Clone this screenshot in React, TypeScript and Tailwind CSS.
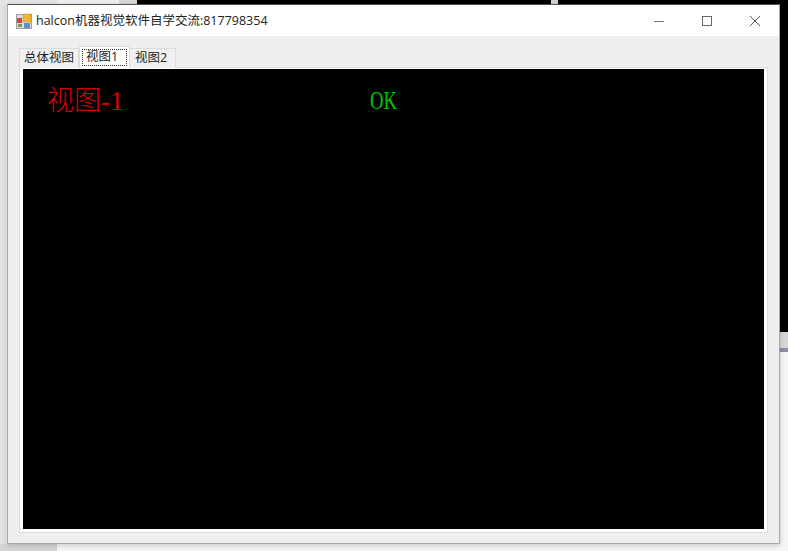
const uiFont = { fontFamily: '"Open Sans", "Noto Sans CJK SC", sans-serif' };

function AppIcon() {
  return (
    <svg width="16" height="16" viewBox="0 0 16 16" className="shrink-0">
      <rect x="0.5" y="1.5" width="15" height="14" fill="#dcdcdc" stroke="#a0a0a0" />
      <rect x="7" y="1" width="8" height="8" fill="#f2b632" stroke="#c98f18" strokeWidth="0.5" />
      <rect x="1" y="5" width="5" height="5" fill="#d8453a" />
      <rect x="8" y="10" width="6" height="5" fill="#5b8fd0" />
      <rect x="2" y="11" width="4" height="3" fill="#7a9a5a" />
    </svg>
  );
}

function WindowButtons() {
  return (
    <div className="flex h-full items-center">
      <div className="flex w-[48px] justify-center">
        <svg width="12" height="12" viewBox="0 0 12 12">
          <path d="M1 6.5H11" stroke="#777" strokeWidth="1" />
        </svg>
      </div>
      <div className="flex w-[48px] justify-center">
        <svg width="12" height="12" viewBox="0 0 12 12">
          <rect x="1.5" y="1.5" width="9" height="9" fill="none" stroke="#666" strokeWidth="1" />
        </svg>
      </div>
      <div className="flex w-[48px] justify-center">
        <svg width="12" height="12" viewBox="0 0 12 12">
          <path d="M1 1L11 11M11 1L1 11" stroke="#555" strokeWidth="1" />
        </svg>
      </div>
    </div>
  );
}

export default function App() {
  return (
    <div className="relative h-[551px] w-[788px] overflow-hidden bg-[#f4f4f4]" style={uiFont}>
      {/* windows behind */}
      <div className="absolute left-0 top-0 h-[4px] w-[57px] bg-[#e4e4e4]" />
      <div className="absolute left-[57px] top-0 h-[4px] w-[62px] bg-[#f0f0f0]" />
      <div className="absolute left-[119px] top-0 h-[4px] w-[18px] bg-[#d8d8d8]" />
      <div className="absolute left-[137px] top-0 h-[4px] w-[414px] bg-black" />
      <div className="absolute left-[551px] top-0 h-[4px] w-[7px] bg-[#d0d0d0]" />
      <div className="absolute left-[558px] top-0 h-[4px] w-[230px] bg-black" />
      <div className="absolute left-[780px] top-[4px] h-[328px] w-[8px] bg-black" />
      <div className="absolute left-[780px] top-[332px] h-[16px] w-[8px] bg-[#d6d6d6]" />
      <div className="absolute left-[780px] top-[348px] h-[4px] w-[8px] bg-[#8a90a8]" />
      <div className="absolute left-0 top-[4px] h-[540px] w-[6px] bg-[#e2e2e2]" />
      <div className="absolute left-0 top-[544px] h-[7px] w-[57px] bg-[#d4d4d4]" />

      {/* main window */}
      <div className="absolute left-[7px] top-[4px] flex h-[540px] w-[773px] flex-col border border-[#a8a8a8] border-t-[#555] bg-[#efefef] shadow-[0_1px_5px_rgba(0,0,0,0.2)]">
        <div className="flex h-[31px] shrink-0 items-center justify-between bg-white">
          <div className="flex items-center gap-[4px] pl-[8px] pt-[1px] text-[12.5px] text-[#222]">
            <AppIcon />
            <span>halcon机器视觉软件自学交流:817798354</span>
          </div>
          <WindowButtons />
        </div>

        <div className="flex min-h-0 flex-1 flex-col px-[11px] pb-[10px] pt-[10px]">
          <div className="relative z-10 -mb-px flex h-[22px] shrink-0 items-end text-[12.5px] leading-none text-[#222]">
            <div className="flex h-[20px] w-[60px] items-center justify-center border border-b-0 border-[#dcdcdc] bg-[#f0f0f0]">
              总体视图
            </div>
            <div className="flex h-[22px] w-[51px] items-center border border-b-0 border-[#dcdcdc] bg-white p-[2px]">
              <div className="flex h-full w-full items-center justify-center border border-dotted border-[#333] pr-[5px]">
                视图1
              </div>
            </div>
            <div className="flex h-[20px] w-[46px] items-center border border-b-0 border-l-0 border-[#dcdcdc] bg-[#f0f0f0] pl-[5px]">
              视图2
            </div>
          </div>
          <div className="min-h-0 flex-1 border border-[#dcdcdc] bg-white px-[3px] pb-[3px] pt-px">
            <div className="flex h-full items-start bg-black pl-[24px] pt-[16px] [font-family:'Liberation_Serif','Noto_Sans_CJK_SC',serif]">
              <span className="w-[323px] text-[27px] font-light leading-[32px] text-[#d80000]">视图-1</span>
              <span className="origin-left scale-x-[0.72] text-[26px] leading-[32px] text-[#00c800]">OK</span>
            </div>
          </div>
        </div>
      </div>
    </div>
  );
}
